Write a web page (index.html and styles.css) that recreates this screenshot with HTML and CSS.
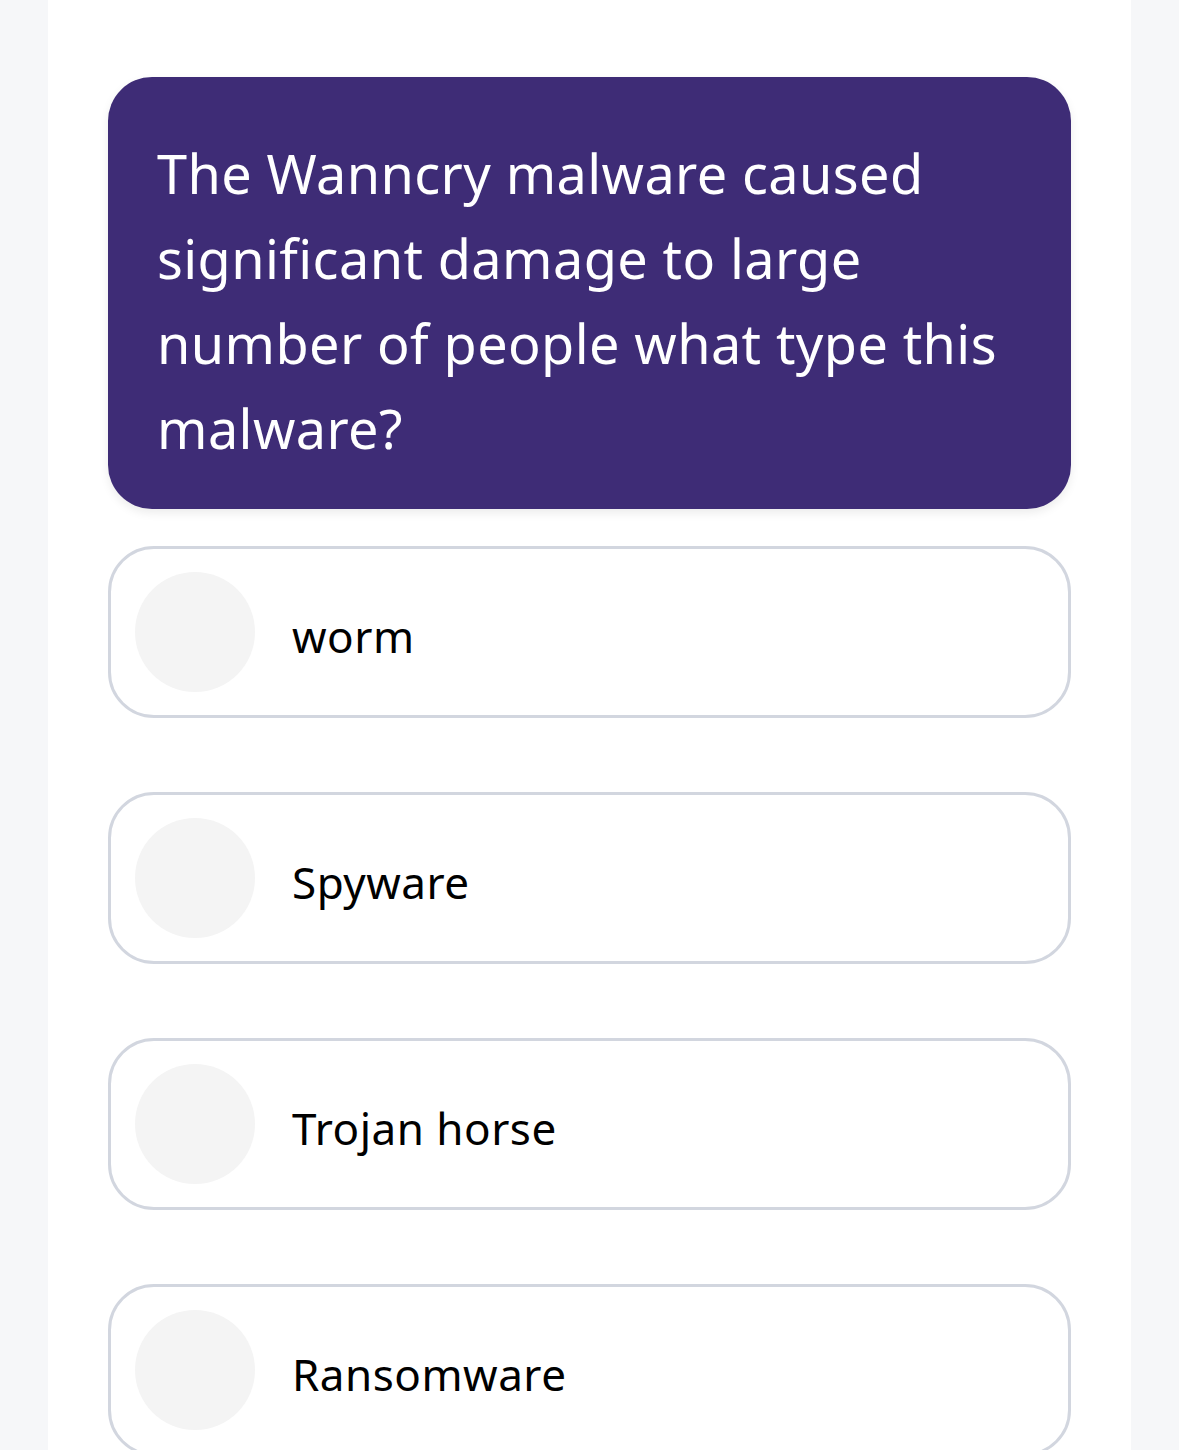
FILE: index.html
```html
<!DOCTYPE html>
<html lang="en">
<head>
<meta charset="utf-8">
<title>Quiz</title>
<link rel="stylesheet" href="styles.css">
</head>
<body>
<main class="column">
  <section class="question">
    <p class="question-text">The Wanncry malware caused significant damage to large number of people what type this malware?</p>
  </section>
  <ul class="options">
    <li class="option"><span class="radio"></span><span class="label">worm</span></li>
    <li class="option"><span class="radio"></span><span class="label">Spyware</span></li>
    <li class="option"><span class="radio"></span><span class="label">Trojan horse</span></li>
    <li class="option"><span class="radio"></span><span class="label">Ransomware</span></li>
  </ul>
</main>
</body>
</html>
```
FILE: styles.css
```css
html, body {
  margin: 0;
  padding: 0;
  background: #f6f7f9;
  font-family: "Noto Sans", "Open Sans", sans-serif;
}
.column {
  width: 1083px;
  margin-left: 48px;
  background: #ffffff;
  min-height: 1450px;
  box-sizing: border-box;
  padding: 77px 60px 0 60px;
}
.question {
  background: #3e2c76;
  border-radius: 44px;
  padding: 54px 49px 38px 49px;
  box-shadow: 0 4px 10px rgba(0, 0, 0, 0.08);
}
.question-text {
  margin: 0;
  color: #ffffff;
  font-size: 54px;
  line-height: 85px;
  letter-spacing: 0.4px;
}
.options {
  list-style: none;
  margin: 37px 0 0 0;
  padding: 0;
  display: flex;
  flex-direction: column;
  gap: 74px;
}
.option {
  height: 172px;
  box-sizing: border-box;
  border: 3px solid #d2d6df;
  border-radius: 46px;
  display: flex;
  align-items: center;
  padding-left: 24px;
  gap: 37px;
}
.radio {
  width: 120px;
  height: 120px;
  border-radius: 50%;
  background: #f4f4f4;
  flex: none;
}
.label {
  font-size: 44px;
  color: #000000;
  letter-spacing: 0.5px;
  margin-top: 8px;
}
```
